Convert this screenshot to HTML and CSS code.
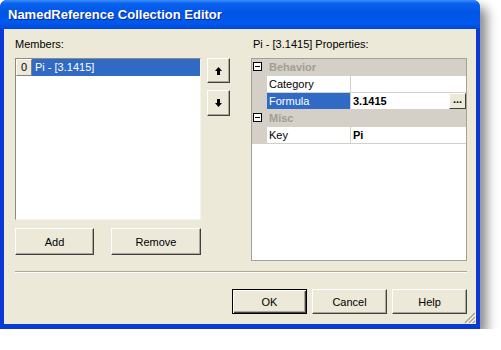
FILE: index.html
```html
<!DOCTYPE html>
<html lang="en">
<head>
  <meta charset="UTF-8" />
  <title>NamedReference Collection Editor</title>
  <link rel="stylesheet" href="styles.css">
</head>
<body>
  <div class="window">
    <div class="titlebar">NamedReference Collection Editor</div>
    <div class="client">
      <div class="top">
        <div class="members">
          <div class="label">Members:</div>
          <div class="listbox">
            <div class="list-row">
              <span class="index">0</span>
              <span class="item selected">Pi - [3.1415]</span>
            </div>
          </div>
          <div class="list-buttons">
            <button class="btn btn-add">Add</button>
            <button class="btn btn-remove">Remove</button>
          </div>
        </div>
        <div class="arrows">
          <button class="btn arrow-btn">
            <svg width="7" height="8" viewBox="0 0 7 8"><path d="M3.5 0 L7 4 H5 V8 H2 V4 H0 Z" fill="#000"/></svg>
          </button>
          <button class="btn arrow-btn arrow-down">
            <svg width="7" height="8" viewBox="0 0 7 8"><path d="M3.5 8 L7 4 H5 V0 H2 V4 H0 Z" fill="#000"/></svg>
          </button>
        </div>
        <div class="props">
          <div class="label props-label">Pi - [3.1415] Properties:</div>
          <div class="grid">
            <div class="rows">
              <div class="row category">
                <span class="gutter"><span class="minus"></span></span>
                <span class="cat-name">Behavior</span>
              </div>
              <div class="row">
                <span class="gutter"></span>
                <span class="name">Category</span>
                <span class="value"></span>
              </div>
              <div class="row">
                <span class="gutter"></span>
                <span class="name selected">Formula</span>
                <span class="value"><b>3.1415</b><span class="dots">...</span></span>
              </div>
              <div class="row category">
                <span class="gutter"><span class="minus"></span></span>
                <span class="cat-name">Misc</span>
              </div>
              <div class="row">
                <span class="gutter"></span>
                <span class="name">Key</span>
                <span class="value"><b>Pi</b></span>
              </div>
            </div>
          </div>
        </div>
      </div>
      <div class="separator"></div>
      <div class="footer">
        <button class="btn btn-dialog btn-default">OK</button>
        <button class="btn btn-dialog">Cancel</button>
        <button class="btn btn-dialog">Help</button>
      </div>
      <svg class="grip" width="12" height="12" viewBox="0 0 12 12">
        <path d="M11 1 L1 11 M11 5 L5 11 M11 9 L9 11" stroke="#A9A696" stroke-width="1.5"/>
        <path d="M12 2 L2 12 M12 6 L6 12 M12 10 L10 12" stroke="#fff" stroke-width="1"/>
      </svg>
    </div>
  </div>
</body>
</html>
```

FILE: styles.css
```css
body {
  margin: 0;
  background: #fff;
  font-family: "Liberation Sans", Arial, sans-serif;
  font-size: 11px;
  color: #000;
}
.window {
  width: 480px;
  height: 329px;
  background: #0a3ad6;
  border-radius: 7px 7px 0 0;
  box-shadow: 7px 7px 11px rgba(0,0,0,0.45);
  display: flex;
  flex-direction: column;
}
.titlebar {
  height: 29px;
  line-height: 30px;
  padding-left: 8px;
  border-radius: 7px 7px 0 0;
  background: linear-gradient(to bottom, #3d8ffb 0%, #0a62ee 12%, #0055e6 45%, #0058ee 80%, #0049d8 100%);
  color: #fff;
  font-size: 13px;
  font-weight: bold;
  text-shadow: 1px 1px #0b2a8f;
}
.client {
  position: relative;
  height: 295px;
  margin: 0 4px;
  padding: 9px 9px 0 11px;
  box-sizing: border-box;
  background: #ece9d8;
}
.top {
  display: flex;
  height: 223px;
}
.label {
  height: 20px;
  line-height: 13px;
}
.members {
  width: 186px;
}
.listbox {
  height: 162px;
  box-sizing: border-box;
  background: #fff;
  border: 1px solid;
  border-color: #8d8a80 #f4f3ee #f4f3ee #8d8a80;
}
.list-row {
  display: flex;
  height: 17px;
  line-height: 17px;
}
.index {
  width: 14px;
  text-align: center;
  background: #ece9d8;
  border: 1px solid;
  border-color: #fff #808080 #808080 #fff;
  line-height: 15px;
}
.item {
  flex: 1;
  padding-left: 3px;
}
.selected {
  background: #316ac5;
  color: #fff;
}
.btn {
  font-family: "Liberation Sans", Arial, sans-serif;
  font-size: 11px;
  color: #000;
  background: #ece9d8;
  border: 1px solid;
  border-color: #fff #404040 #404040 #fff;
  box-shadow: inset -1px -1px #aca899;
  padding: 0;
  margin: 0;
  box-sizing: border-box;
}
.list-buttons {
  display: flex;
  gap: 17px;
  margin-top: 8px;
}
.btn-add {
  width: 79px;
  height: 27px;
}
.btn-remove {
  width: 90px;
  height: 27px;
}
.arrows {
  display: flex;
  flex-direction: column;
  gap: 7px;
  margin-left: 6px;
  padding-top: 20px;
}
.arrow-btn {
  width: 23px;
  height: 25px;
  display: flex;
  align-items: center;
  justify-content: center;
}
.arrow-down {
  height: 26px;
}
.props {
  margin-left: auto;
  width: 216px;
}
.props-label {
  padding-left: 2px;
}
.grid {
  height: 203px;
  box-sizing: border-box;
  background: #fff;
  border: 1px solid #a5a294;
}
.rows {
  background: #d4d0c8;
  display: flex;
  flex-direction: column;
  gap: 1px;
  padding-bottom: 1px;
}
.row {
  display: flex;
  gap: 1px;
  height: 16px;
  line-height: 16px;
}
.gutter {
  width: 14px;
  position: relative;
}
.minus {
  position: absolute;
  left: 1px;
  top: 3px;
  width: 7px;
  height: 7px;
  border: 1px solid #000;
  background: #fff;
}
.minus::after {
  content: "";
  position: absolute;
  left: 1px;
  top: 3px;
  width: 5px;
  height: 1px;
  background: #000;
}
.cat-name {
  padding-left: 2px;
  font-weight: bold;
  color: #a19e94;
}
.name {
  width: 81px;
  padding-left: 2px;
  background: #fff;
}
.name.selected {
  background: #316ac5;
}
.value {
  flex: 1;
  display: flex;
  padding-left: 2px;
  background: #fff;
}
.value b {
  flex: 1;
}
.dots {
  width: 15px;
  height: 14px;
  line-height: 10px;
  text-align: center;
  font-weight: bold;
  background: #ece9d8;
  border: 1px solid;
  border-color: #fff #404040 #404040 #fff;
}
.separator {
  margin-top: 10px;
  height: 1px;
  border-top: 1px solid #aca899;
  background: #fff;
}
.footer {
  display: flex;
  justify-content: flex-end;
  gap: 5px;
  margin-top: 16px;
}
.btn-dialog {
  width: 75px;
  height: 25px;
}
.btn-default {
  border-color: #000;
  box-shadow: inset 1px 1px #fff, inset -1px -1px #404040, inset -2px -2px #aca899;
}
.grip {
  position: absolute;
  right: 0;
  bottom: 0;
}
```
